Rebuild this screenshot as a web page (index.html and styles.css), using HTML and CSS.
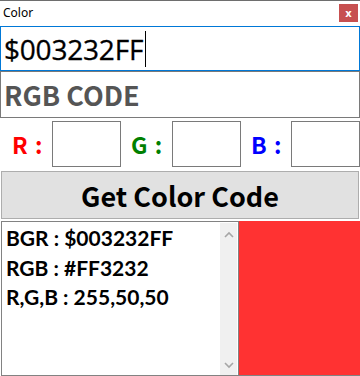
FILE: index.html
```html
<!DOCTYPE html>
<html>
<head>
<meta charset="utf-8">
<link rel="stylesheet" href="styles.css">
</head>
<body>
<div class="window">
  <div class="titlebar">
    <span class="title">Color</span>
    <span class="close">x</span>
  </div>
  <div class="edit edit-focus"><span class="value">$003232FF</span><span class="caret"></span></div>
  <div class="edit edit-gray"><span class="placeholder">RGB CODE</span></div>
  <div class="rgbrow">
    <span class="lbl lbl-r">R :</span><div class="box"></div>
    <span class="lbl lbl-g">G :</span><div class="box"></div>
    <span class="lbl lbl-b">B :</span><div class="box"></div>
  </div>
  <div class="btn">Get Color Code</div>
  <div class="bottom">
    <div class="memo">
      <div class="memo-text">
        <div class="line">BGR : $003232FF</div>
        <div class="line">RGB : #FF3232</div>
        <div class="line">R,G,B : 255,50,50</div>
      </div>
      <div class="scroll">
        <svg class="arrow" width="10" height="7" viewBox="0 0 10 7"><path d="M1 6 L5 2 L9 6" fill="none" stroke="#a6a6a6" stroke-width="1.6"/></svg>
        <svg class="arrow" width="10" height="7" viewBox="0 0 10 7"><path d="M1 1 L5 5 L9 1" fill="none" stroke="#a6a6a6" stroke-width="1.6"/></svg>
      </div>
    </div>
    <div class="swatch"></div>
  </div>
</div>
</body>
</html>
```
FILE: styles.css
```css
html, body { margin: 0; padding: 0; background: #fff; }
.window {
  width: 360px;
  height: 376px;
  box-sizing: border-box;
  border-top: 1px solid #6e6e6e;
  display: flex;
  flex-direction: column;
  overflow: hidden;
}
.titlebar {
  height: 25px;
  display: flex;
  align-items: center;
  justify-content: space-between;
  padding: 0 2px 0 3px;
}
.title {
  font-family: "Noto Sans", sans-serif;
  font-size: 12px;
  color: #000;
  margin-top: -2px;
}
.close {
  width: 19px;
  height: 18px;
  background: #c75050;
  color: #fff;
  font-family: "DejaVu Sans", sans-serif;
  font-weight: bold;
  font-size: 10px;
  display: flex;
  align-items: center;
  justify-content: center;
  margin-top: -1px;
}
.edit {
  box-sizing: border-box;
  width: 360px;
  display: flex;
  align-items: center;
}
.edit-focus {
  height: 45px;
  border: 1px solid #0078d7;
  padding-left: 3px;
}
.value {
  font-family: "Open Sans", sans-serif;
  font-size: 28px;
  color: #000;
  letter-spacing: -0.2px;
  -webkit-text-stroke: 0.3px #000;
}
.caret {
  display: inline-block;
  width: 1px;
  height: 36px;
  background: #000;
  margin-left: 2px;
}
.edit-gray {
  height: 47px;
  border: 1px solid #7a7a7a;
  padding-left: 3px;
}
.placeholder {
  font-family: "Noto Sans CJK KR", "Noto Sans", sans-serif;
  font-weight: bold;
  font-size: 27px;
  color: #555;
}
.rgbrow {
  height: 51px;
  display: flex;
  align-items: center;
  padding-top: 1px;
  box-sizing: border-box;
}
.lbl {
  font-family: "Noto Sans CJK KR", "Noto Sans", sans-serif;
  font-weight: bold;
  font-size: 23px;
  word-spacing: 2px;
}
.lbl-r { color: #ff0000; margin-left: 12px; width: 40px; }
.lbl-g { color: #008000; margin-left: 10px; width: 41px; }
.lbl-b { color: #0000ff; margin-left: 10px; width: 40px; }
.box {
  width: 69px;
  height: 46px;
  box-sizing: border-box;
  border: 1px solid #7a7a7a;
}
.btn {
  margin: 2px 1px 0 1px;
  height: 48px;
  box-sizing: border-box;
  background: #e1e1e1;
  border: 1px solid #adadad;
  display: flex;
  align-items: center;
  justify-content: center;
  font-family: "Noto Sans CJK KR", "Noto Sans", sans-serif;
  font-weight: bold;
  font-size: 27px;
  color: #000;
}
.bottom {
  margin: 2px 0 0 1px;
  flex: 1;
  display: flex;
  border-bottom: 1px solid #828282;
}
.memo {
  width: 238px;
  box-sizing: border-box;
  border: 1px solid #828282;
  border-bottom: none;
  display: flex;
  padding: 1px 1px 0 1px;
}
.memo-text {
  flex: 1;
  padding: 0 0 0 3px;
}
.line {
  font-family: "Lato", "Noto Sans", sans-serif;
  font-weight: bold;
  font-size: 21px;
  line-height: 29.5px;
  color: #000;
  white-space: nowrap;
}
.scroll {
  width: 17px;
  background: #f0f0f0;
  display: flex;
  flex-direction: column;
  justify-content: space-between;
  align-items: center;
  padding: 8px 0 6px 0;
}
.swatch {
  flex: 1;
  background: #ff3232;
}
```
